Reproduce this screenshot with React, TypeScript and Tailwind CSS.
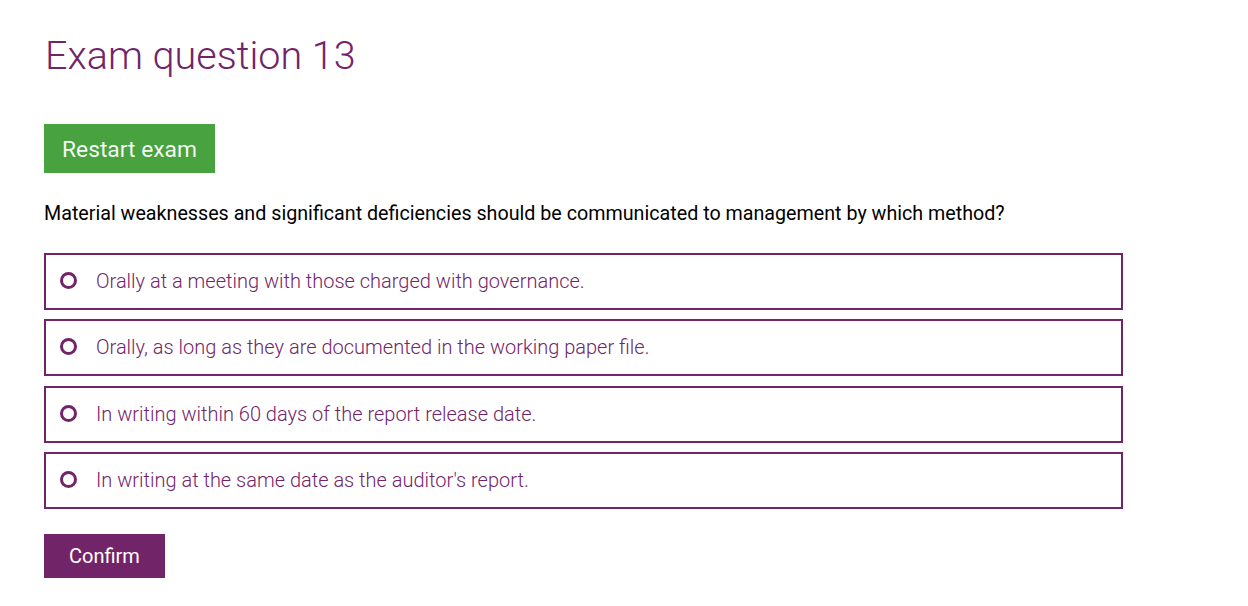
const options = [
  'Orally at a meeting with those charged with governance.',
  'Orally, as long as they are documented in the working paper file.',
  'In writing within 60 days of the report release date.',
  "In writing at the same date as the auditor's report.",
]

export default function App() {
  return (
    <div className="min-h-screen bg-white font-['Roboto',sans-serif] pl-[44px] pt-[30px]">
      <h1 className="text-[39.5px] leading-[52px] font-light text-[#722469] pl-px">Exam question 13</h1>

      <button className="mt-[42px] h-[49px] px-[18px] pt-[3px] bg-[#48a23f] text-white/95 text-[22.8px]">
        Restart exam
      </button>

      <p className="mt-[29px] text-[19.7px] leading-[24px] text-black">
        Material weaknesses and significant deficiencies should be communicated to management by which method?
      </p>

      <div className="mt-[27px] w-[1079px] flex flex-col gap-[9.4px]">
        {options.map((opt) => (
          <label
            key={opt}
            className="h-[57px] border-2 border-[#722469] flex items-center pl-[14px] cursor-pointer"
          >
            <span className="w-[17px] h-[17px] -mt-[2px] rounded-full border-[3px] border-[#722469] shrink-0" />
            <span className="ml-[19px] -mt-px text-[20px] font-light text-[#722469]">{opt}</span>
          </label>
        ))}
      </div>

      <button className="mt-[25px] h-[44px] px-[25px] bg-[#722469] text-white text-[20px]">
        Confirm
      </button>
    </div>
  )
}
